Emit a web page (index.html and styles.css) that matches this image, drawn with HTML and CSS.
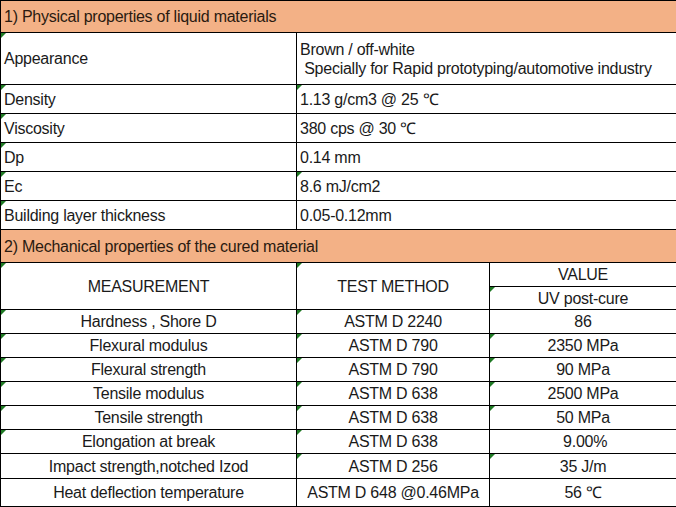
FILE: index.html
```html
<!DOCTYPE html>
<html>
<head>
<meta charset="utf-8">
<link rel="stylesheet" href="styles.css">
</head>
<body>
<table class="sheet">
  <colgroup><col class="c1"><col class="c2"><col class="c3"></colgroup>
  <tr class="h-sec"><td colspan="3" class="sec">1) Physical properties of liquid materials</td></tr>
  <tr class="h-app"><td class="lft g">Appearance</td><td colspan="2" class="lft"><div>Brown / off-white</div><div>&nbsp;Specially for Rapid prototyping/automotive industry</div></td></tr>
  <tr class="h-p"><td class="lft g">Density</td><td colspan="2" class="lft g">1.13 g/cm3 @ 25 ℃</td></tr>
  <tr class="h-p"><td class="lft g">Viscosity</td><td colspan="2" class="lft">380 cps @ 30 ℃</td></tr>
  <tr class="h-p"><td class="lft g">Dp</td><td colspan="2" class="lft">0.14 mm</td></tr>
  <tr class="h-p"><td class="lft g">Ec</td><td colspan="2" class="lft g">8.6 mJ/cm2</td></tr>
  <tr class="h-p"><td class="lft g">Building layer thickness</td><td colspan="2" class="lft">0.05-0.12mm</td></tr>
  <tr class="h-sec2"><td colspan="3" class="sec">2) Mechanical properties of the cured material</td></tr>
  <tr class="h-v1"><td rowspan="2" class="g">MEASUREMENT</td><td rowspan="2" class="g">TEST METHOD</td><td>VALUE</td></tr>
  <tr class="h-v2"><td class="g">UV post-cure</td></tr>
  <tr class="h-m"><td class="g">Hardness , Shore D</td><td class="g">ASTM D 2240</td><td>86</td></tr>
  <tr class="h-m"><td class="g">Flexural modulus</td><td class="g">ASTM D 790</td><td class="g">2350 MPa</td></tr>
  <tr class="h-m"><td class="g">Flexural strength</td><td class="g">ASTM D 790</td><td class="g">90 MPa</td></tr>
  <tr class="h-m"><td class="g">Tensile modulus</td><td class="g">ASTM D 638</td><td class="g">2500 MPa</td></tr>
  <tr class="h-m"><td class="g">Tensile strength</td><td class="g">ASTM D 638</td><td class="g">50 MPa</td></tr>
  <tr class="h-m"><td class="g">Elongation at break</td><td class="g">ASTM D 638</td><td>&nbsp;9.00%</td></tr>
  <tr class="h-m2"><td>Impact strength,notched Izod</td><td class="g">ASTM D 256</td><td class="g">35 J/m</td></tr>
  <tr class="h-last"><td>Heat deflection temperature</td><td>ASTM D 648 @0.46MPa</td><td>56 ℃</td></tr>
</table>
</body>
</html>
```

FILE: styles.css
```css
html, body {
  margin: 0;
  padding: 0;
  background: #ffffff;
}
.sheet {
  border-collapse: collapse;
  table-layout: fixed;
  width: 676px;
  font-family: "Liberation Sans", Arial, sans-serif;
  font-size: 16px;
  letter-spacing: -0.25px;
  color: #1a1a1a;
}
.c1 { width: 296px; }
.c2 { width: 193px; }
.c3 { width: 187px; }
.sheet td {
  border: 1px solid #000;
  padding: 0 3px;
  text-align: center;
  vertical-align: middle;
  white-space: nowrap;
  position: relative;
  line-height: 19px;
}
.sheet td.lft {
  text-align: left;
  padding-left: 3px;
}
.sheet td.sec {
  background: #f3b186;
  color: #2a1a10;
  text-align: left;
  padding-left: 3px;
}
.h-sec td { height: 31px; }
.h-sec2 td { height: 32px; }
.h-app td { height: 51px; }
.h-p td { height: 28px; }
.h-v1 td { height: 23px; }
.h-v2 td { height: 22px; }
.h-m td { height: 23px; }
.h-m2 td { height: 24px; }
.h-last td { height: 27px; }
.sheet td.g::before {
  content: "";
  position: absolute;
  left: 0;
  top: 0;
  width: 0;
  height: 0;
  border-top: 5px solid #1f7a24;
  border-right: 5px solid transparent;
}
```
